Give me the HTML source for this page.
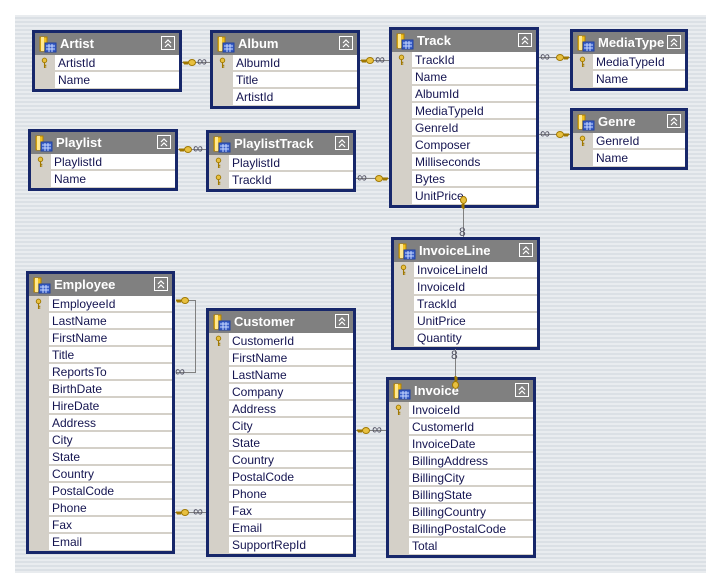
<!DOCTYPE html>
<html><head><meta charset="utf-8"><style>
*{margin:0;padding:0;box-sizing:border-box}
body{width:724px;height:583px;background:#fff;position:relative;overflow:hidden;font-family:"Liberation Sans",sans-serif}
#bg{position:absolute;left:15px;top:15px;width:691px;height:558px;background:repeating-linear-gradient(to bottom,#e9ecef 0 2px,#dbe0e5 2px 4px)}
.t{position:absolute;border:3px solid #17276a;background:#d4d0c8}
.h{height:22px;background:#808080;color:#fff;font-weight:bold;font-size:13px;line-height:21px;padding-left:25px;position:relative;white-space:nowrap}
.h .ic{position:absolute;left:4px;top:3px;width:18px;height:17px}
.h .b{position:absolute;right:4px;top:3px;width:14px;height:14px;border:1px solid #fff}
.r{position:relative;margin-left:20px;height:17px;background:#fff;border-bottom:2px solid #d4d0c8;font-size:12px;line-height:16px;padding-left:3px;color:#141450;white-space:nowrap}
.r:last-child{border-bottom:1px solid #d4d0c8}
.k{position:absolute;left:-15px;top:2px}
svg.ov{position:absolute;left:0;top:0}
</style></head><body>
<div id="bg"></div>

<svg width="0" height="0" style="position:absolute"><defs>
<symbol id="tic" viewBox="0 0 18 17"><rect x="1" y="1" width="7" height="14" fill="#f0c020" stroke="#b08000" stroke-width="1"/><rect x="2" y="1" width="3" height="14" fill="#ffe890"/><rect x="6" y="7" width="11" height="9" fill="#3a5fc8" stroke="#2040a0"/><path d="M7 10h9M7 13h9M10 8v8M13 8v8" stroke="#c8d8ff" stroke-width="1"/></symbol>
<symbol id="chev" viewBox="0 0 12 12"><path d="M3 6l3-3 3 3M3 10l3-3 3 3" stroke="#fff" fill="none" stroke-width="1.2"/></symbol>
<symbol id="pk" viewBox="0 0 10 14"><circle cx="5" cy="3.5" r="2.5" fill="#e8c040" stroke="#a07800"/><path d="M5 6v6M5 9h2M5 11h2" stroke="#a07800" stroke-width="1.2"/></symbol>
</defs></svg>

<div class="t" style="left:32px;top:30px;width:150px">
<div class="h"><svg class="ic"><use href="#tic"/></svg>Artist<svg class="b"><use href="#chev"/></svg></div>
<div class="r"><svg class="k" width="9" height="13"><use href="#pk"/></svg>ArtistId</div><div class="r">Name</div></div>
<div class="t" style="left:210px;top:30px;width:150px">
<div class="h"><svg class="ic"><use href="#tic"/></svg>Album<svg class="b"><use href="#chev"/></svg></div>
<div class="r"><svg class="k" width="9" height="13"><use href="#pk"/></svg>AlbumId</div><div class="r">Title</div><div class="r">ArtistId</div></div>
<div class="t" style="left:389px;top:27px;width:150px">
<div class="h"><svg class="ic"><use href="#tic"/></svg>Track<svg class="b"><use href="#chev"/></svg></div>
<div class="r"><svg class="k" width="9" height="13"><use href="#pk"/></svg>TrackId</div><div class="r">Name</div><div class="r">AlbumId</div><div class="r">MediaTypeId</div><div class="r">GenreId</div><div class="r">Composer</div><div class="r">Milliseconds</div><div class="r">Bytes</div><div class="r">UnitPrice</div></div>
<div class="t" style="left:570px;top:29px;width:118px">
<div class="h"><svg class="ic"><use href="#tic"/></svg>MediaType<svg class="b"><use href="#chev"/></svg></div>
<div class="r"><svg class="k" width="9" height="13"><use href="#pk"/></svg>MediaTypeId</div><div class="r">Name</div></div>
<div class="t" style="left:570px;top:108px;width:118px">
<div class="h"><svg class="ic"><use href="#tic"/></svg>Genre<svg class="b"><use href="#chev"/></svg></div>
<div class="r"><svg class="k" width="9" height="13"><use href="#pk"/></svg>GenreId</div><div class="r">Name</div></div>
<div class="t" style="left:28px;top:129px;width:150px">
<div class="h"><svg class="ic"><use href="#tic"/></svg>Playlist<svg class="b"><use href="#chev"/></svg></div>
<div class="r"><svg class="k" width="9" height="13"><use href="#pk"/></svg>PlaylistId</div><div class="r">Name</div></div>
<div class="t" style="left:206px;top:130px;width:150px">
<div class="h"><svg class="ic"><use href="#tic"/></svg>PlaylistTrack<svg class="b"><use href="#chev"/></svg></div>
<div class="r"><svg class="k" width="9" height="13"><use href="#pk"/></svg>PlaylistId</div><div class="r"><svg class="k" width="9" height="13"><use href="#pk"/></svg>TrackId</div></div>
<div class="t" style="left:391px;top:237px;width:149px">
<div class="h"><svg class="ic"><use href="#tic"/></svg>InvoiceLine<svg class="b"><use href="#chev"/></svg></div>
<div class="r"><svg class="k" width="9" height="13"><use href="#pk"/></svg>InvoiceLineId</div><div class="r">InvoiceId</div><div class="r">TrackId</div><div class="r">UnitPrice</div><div class="r">Quantity</div></div>
<div class="t" style="left:26px;top:271px;width:149px">
<div class="h"><svg class="ic"><use href="#tic"/></svg>Employee<svg class="b"><use href="#chev"/></svg></div>
<div class="r"><svg class="k" width="9" height="13"><use href="#pk"/></svg>EmployeeId</div><div class="r">LastName</div><div class="r">FirstName</div><div class="r">Title</div><div class="r">ReportsTo</div><div class="r">BirthDate</div><div class="r">HireDate</div><div class="r">Address</div><div class="r">City</div><div class="r">State</div><div class="r">Country</div><div class="r">PostalCode</div><div class="r">Phone</div><div class="r">Fax</div><div class="r">Email</div></div>
<div class="t" style="left:206px;top:308px;width:150px">
<div class="h"><svg class="ic"><use href="#tic"/></svg>Customer<svg class="b"><use href="#chev"/></svg></div>
<div class="r"><svg class="k" width="9" height="13"><use href="#pk"/></svg>CustomerId</div><div class="r">FirstName</div><div class="r">LastName</div><div class="r">Company</div><div class="r">Address</div><div class="r">City</div><div class="r">State</div><div class="r">Country</div><div class="r">PostalCode</div><div class="r">Phone</div><div class="r">Fax</div><div class="r">Email</div><div class="r">SupportRepId</div></div>
<div class="t" style="left:386px;top:377px;width:150px">
<div class="h"><svg class="ic"><use href="#tic"/></svg>Invoice<svg class="b"><use href="#chev"/></svg></div>
<div class="r"><svg class="k" width="9" height="13"><use href="#pk"/></svg>InvoiceId</div><div class="r">CustomerId</div><div class="r">InvoiceDate</div><div class="r">BillingAddress</div><div class="r">BillingCity</div><div class="r">BillingState</div><div class="r">BillingCountry</div><div class="r">BillingPostalCode</div><div class="r">Total</div></div>

<svg class="ov" width="724" height="583">
<defs>
<g id="hk"><path d="M0 0h6M2 0v2M4 0v2" stroke="#a07800" stroke-width="2"/><ellipse cx="9" cy="0" rx="3.5" ry="3" fill="#e8c040" stroke="#a07800"/></g>
<g id="inf"><text x="0" y="4" font-size="14" fill="#556" font-family="Liberation Sans, sans-serif">∞</text></g>
</defs>
<g stroke="#808080" stroke-width="1" fill="none">
<path d="M182 62.5H210"/><path d="M360 60.5H389"/><path d="M539 57.5H570"/><path d="M539 134.5H570"/>
<path d="M178 149.5H206"/><path d="M356 178.5H389"/><path d="M463.5 208V237"/><path d="M455.5 349V377"/>
<path d="M176 300.5H195.5V372.5H176"/><path d="M175 512.5H206"/><path d="M356 430.5H386"/>
</g>
<use href="#hk" x="183" y="62.5"/><use href="#inf" x="197" y="62"/>
<use href="#hk" x="361" y="60.5"/><use href="#inf" x="375" y="60"/>
<use href="#inf" x="540" y="57"/><use href="#hk" transform="translate(569 57.5) scale(-1 1)"/>
<use href="#inf" x="540" y="134"/><use href="#hk" transform="translate(569 134.5) scale(-1 1)"/>
<use href="#hk" x="179" y="149.5"/><use href="#inf" x="193" y="149"/>
<use href="#inf" x="357" y="178"/><use href="#hk" transform="translate(388 178.5) scale(-1 1)"/>
<use href="#hk" transform="translate(463.5 209) rotate(90) scale(-1 1)"/><text x="459" y="236" font-size="12" fill="#556" font-family="Liberation Sans, sans-serif">8</text>
<text x="451" y="359" font-size="12" fill="#556" font-family="Liberation Sans, sans-serif">8</text><use href="#hk" transform="translate(455.5 376) rotate(-90) scale(-1 1)"/>
<use href="#hk" x="176" y="300.5"/><use href="#inf" x="175" y="372"/>
<use href="#hk" x="176" y="512.5"/><use href="#inf" x="193" y="512"/>
<use href="#hk" x="357" y="430.5"/><use href="#inf" x="372" y="430"/>
</svg>
</body></html>
